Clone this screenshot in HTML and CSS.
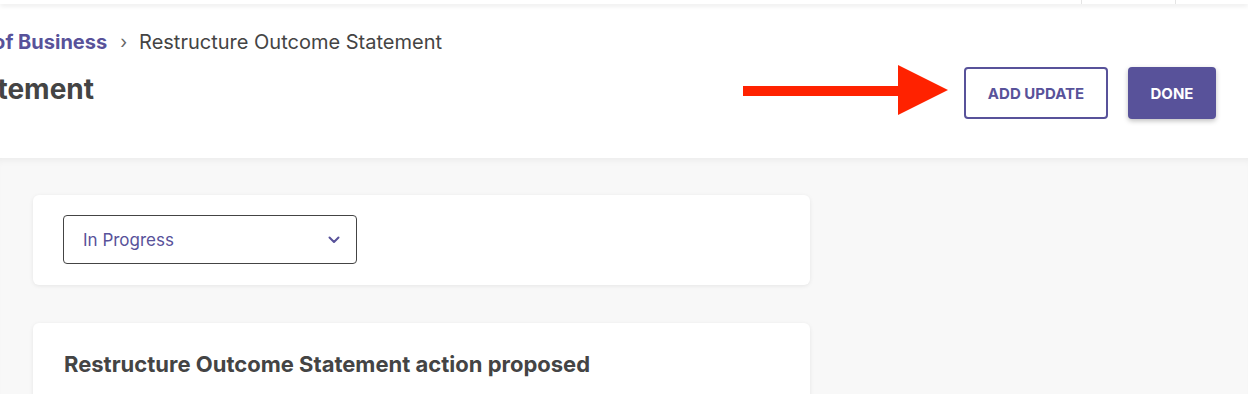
FILE: index.html
```html
<!DOCTYPE html>
<html lang="en">
<head>
    <meta charset="UTF-8">
    <meta name="viewport" content="width=device-width, initial-scale=1.0">
    <title>Restructure Outcome Statement</title>
    <link rel="stylesheet" href="styles.css">
</head>
<body>
    <div class="topbar">
        <div class="topbar-item wide"></div>
        <div class="topbar-item"></div>
    </div>

    <div class="header">
        <div class="heading">
            <div class="crumb-row">
                <div class="breadcrumb">
                    <a href="#" class="crumb-link">Line of Business</a>
                    <span class="crumb-sep">&rsaquo;</span>
                    <span class="crumb-current">Restructure Outcome Statement</span>
                </div>
            </div>
            <div class="title-row">
                <h1 class="page-title">Restructure Outcome Statement</h1>
            </div>
        </div>

        <div class="actions">
            <svg class="pointer" width="205" height="50" viewBox="0 0 205 50">
                <rect x="0" y="21" width="157" height="10" fill="#ff2200"/>
                <polygon points="155,0 205,25 155,50" fill="#ff2200"/>
            </svg>
            <button class="button button-outline">Add Update</button>
            <button class="button button-filled">Done</button>
        </div>
    </div>

    <div class="main">
        <div class="card card-status">
            <div class="select">
                <span class="select-value">In Progress</span>
                <svg class="select-arrow" width="12" height="8" viewBox="0 0 12 8">
                    <path d="M1.5 1.5 L6 6 L10.5 1.5" fill="none" stroke="#58529a" stroke-width="2" stroke-linecap="round" stroke-linejoin="round"/>
                </svg>
            </div>
        </div>

        <div class="card card-activity">
            <h2 class="card-title">Restructure Outcome Statement action proposed</h2>
        </div>
    </div>
</body>
</html>
```

FILE: styles.css
```css
html, body {
    margin: 0;
    padding: 0;
    height: 394px;
    overflow: hidden;
}

body {
    font-family: Inter, 'Noto Sans', sans-serif;
    background-color: #f8f8f8;
    color: #444;
}

.topbar {
    height: 4px;
    background-color: #fff;
    display: flex;
    justify-content: flex-end;
    box-shadow: 0 2px 5px rgba(0, 0, 0, 0.09);
    position: relative;
    z-index: 2;
}

.topbar-item {
    width: 72px;
    border-left: 1px solid #e4e4e4;
}

.topbar-item.wide {
    width: 93px;
}

.header {
    height: 154px;
    background-color: #fff;
    display: flex;
    justify-content: space-between;
    align-items: flex-start;
    padding-right: 32px;
}

.heading {
    padding-top: 26px;
}

.crumb-row {
    width: 442px;
    display: flex;
    justify-content: flex-end;
}

.breadcrumb {
    display: flex;
    align-items: center;
    white-space: nowrap;
    font-size: 20px;
    line-height: 24px;
}

.crumb-link {
    color: #58529a;
    font-weight: 700;
    text-decoration: none;
}

.crumb-sep {
    margin: 0 12px 0 13px;
    color: #666;
    font-size: 18px;
}

.crumb-current {
    color: #444;
}

.title-row {
    width: 94px;
    display: flex;
    justify-content: flex-end;
    margin-top: 18px;
}

.page-title {
    margin: 0;
    white-space: nowrap;
    font-size: 28px;
    line-height: 34px;
    font-weight: 700;
    color: #444;
}

.actions {
    display: flex;
    align-items: center;
    margin-top: 61px;
}

.pointer {
    display: block;
    margin: 0 16px 6px 0;
}

.button {
    height: 52px;
    border-radius: 4px;
    font-family: Inter, 'Noto Sans', sans-serif;
    font-size: 15px;
    font-weight: 700;
    text-transform: uppercase;
    cursor: pointer;
}

.button-outline {
    width: 144px;
    background-color: #fff;
    color: #58529a;
    border: 2px solid #58529a;
}

.button-filled {
    width: 88px;
    margin-left: 20px;
    background-color: #58529a;
    color: #fff;
    border: none;
    box-shadow: 0 2px 5px rgba(0, 0, 0, 0.25);
}

.main {
    height: 236px;
    padding: 37px 0 0 33px;
    box-shadow: inset 0 7px 8px -6px rgba(0, 0, 0, 0.07);
}

.card {
    width: 777px;
    background-color: #fff;
    border-radius: 6px;
    box-shadow: 0 1px 4px rgba(0, 0, 0, 0.08);
    box-sizing: border-box;
}

.card-status {
    height: 90px;
    padding: 20px 30px;
}

.select {
    width: 294px;
    height: 49px;
    box-sizing: border-box;
    border: 1px solid #444;
    border-radius: 4px;
    display: flex;
    align-items: center;
    justify-content: space-between;
    padding: 1px 16px 0 19px;
}

.select-value {
    color: #58529a;
    font-size: 17px;
}

.select-arrow {
    display: block;
}

.card-activity {
    margin-top: 38px;
    height: 120px;
    padding: 28px 31px;
}

.card-title {
    margin: 0;
    font-size: 22px;
    line-height: 26px;
    font-weight: 700;
    color: #444;
}
```
